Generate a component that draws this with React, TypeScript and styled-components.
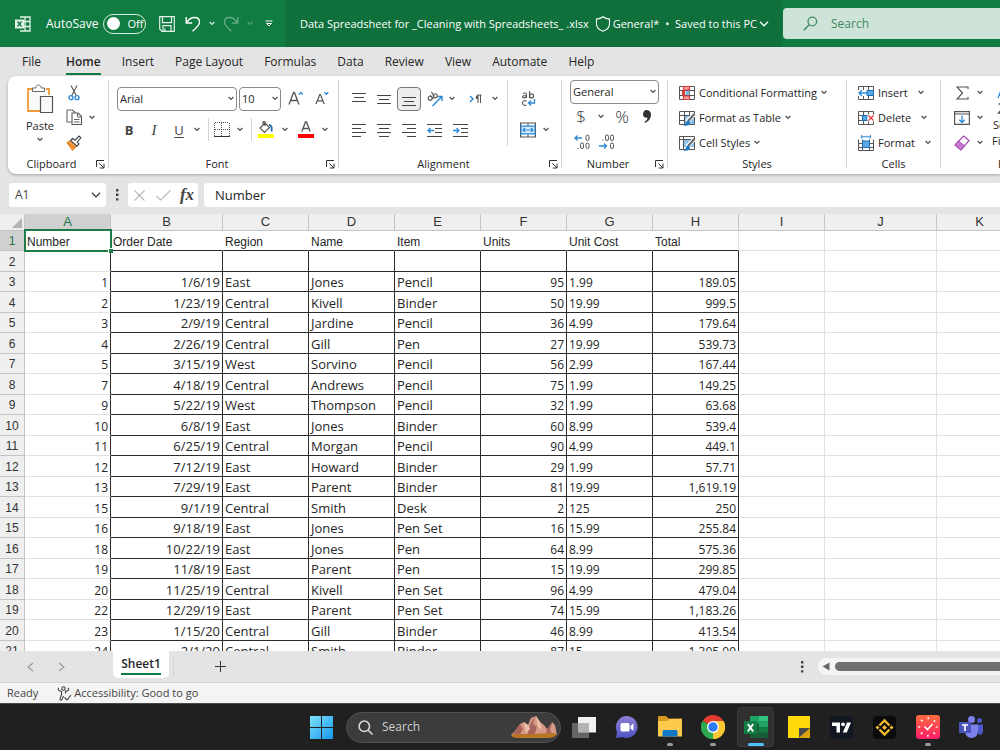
import React from "react";
import styled, { createGlobalStyle, css } from "styled-components";

const ui = `"Open Sans", "Noto Sans", sans-serif`;
const grid = `"Liberation Sans", Arial, sans-serif`;
const blue = "#2b88d8";
const ink = "#555";

const Global = createGlobalStyle`
  *, *::before, *::after { box-sizing: border-box; }
  body { margin: 0; background: #e4e4e4; color: #262626; font: 11px/16px ${ui}; }
  button, input, select { font: inherit; color: inherit; margin: 0; padding: 0; border: 0; background: none; border-radius: 0; }
  button { display: inline-flex; align-items: center; justify-content: center; white-space: nowrap; }
  svg { display: block; flex: none; }
`;

const Page = styled.div`
  display: flex;
  flex-direction: column;
  height: 100vh;
  overflow: hidden;
`;

/* ---------- title bar ---------- */
const TitleBar = styled.header`
  display: flex;
  flex: none;
  height: 47px;
  background: #107c41;
  color: #fff;
  overflow: hidden;
`;
const QuickAccess = styled.div`
  display: flex;
  align-items: center;
  flex: none;
  width: 286px;
  padding-left: 15px;
`;
const AutoSave = styled.label`
  display: flex;
  align-items: center;
  gap: 5px;
  margin: 0 12px 0 15px;
  font-size: 12px;
`;
const Track = styled.span`
  display: flex;
  align-items: center;
  gap: 7px;
  width: 43px;
  height: 20px;
  padding-left: 3px;
  border: 1px solid #d8ebe0;
  border-radius: 10px;
  font-size: 11px;
`;
const Knob = styled.input`
  appearance: none;
  width: 13px;
  height: 13px;
  border-radius: 50%;
  background: #fff;
`;
const QuickButton = styled.button<{ $w: number; $dim?: boolean }>`
  width: ${(p) => p.$w}px;
  height: 24px;
  color: #fff;
  opacity: ${(p) => (p.$dim ? 0.35 : 1)};
`;
const DocTitle = styled.div`
  display: flex;
  align-items: center;
  flex: none;
  width: 496px;
  padding-left: 14px;
  background: #0f703b;
  white-space: nowrap;
`;
const DocButton = styled.button`
  gap: 2px;
  margin-left: 6px;
`;
const SearchBox = styled.label`
  display: flex;
  align-items: center;
  gap: 13px;
  flex: 1 0 300px;
  height: 31px;
  margin: 8px 0 0 1px;
  padding-left: 20px;
  border-radius: 4px;
  background: #cfe4d8;
  color: #3f8a62;
  font-size: 12px;
`;
const BareInput = styled.input`
  flex: 1;
  min-width: 0;
  outline: 0;
  &::placeholder { color: inherit; opacity: 1; }
`;

/* ---------- ribbon tabs ---------- */
const Tabs = styled.nav`
  display: flex;
  align-items: center;
  flex: none;
  height: 29px;
  font-size: 12px;
`;
const FileTab = styled.button`
  height: 22px;
  padding: 0 14px 0 22px;
`;
const Tab = styled.button<{ $active?: boolean }>`
  height: 22px;
  padding: 0;
  margin: 0 10px 0 11px;
  ${(p) => p.$active && css`
    font-weight: 600;
    box-shadow: 0 2px 0 #107c41;
  `}
`;

/* ---------- ribbon ---------- */
const Ribbon = styled.section`
  display: flex;
  flex: none;
  height: 98px;
  margin-left: 8px;
  border-radius: 8px 0 0 8px;
  background: #fff;
  box-shadow: 0 1px 3px rgba(0, 0, 0, 0.28);
  overflow: hidden;
`;
const GroupBox = styled.div<{ $w: number }>`
  display: flex;
  flex-direction: column;
  flex: none;
  width: ${(p) => p.$w}px;
  height: 88px;
  margin-top: 4px;
  border-right: 1px solid #d4d4d4;
`;
const GroupBody = styled.div`
  display: flex;
  flex: none;
  height: 76px;
  padding-left: 8px;
`;
const GroupFoot = styled.div`
  display: flex;
  align-items: center;
  flex: none;
  height: 16px;
`;
const GroupName = styled.span`
  flex: 1;
  text-align: center;
`;
const Launcher = styled.button`
  width: 10px;
  height: 10px;
  margin-right: 3px;
`;
const Column = styled.div<{ $top?: number; $gap?: number }>`
  display: flex;
  flex-direction: column;
  align-items: flex-start;
  gap: ${(p) => p.$gap ?? 0}px;
  padding-top: ${(p) => p.$top ?? 0}px;
`;
const Line = styled.div`
  display: flex;
  align-items: center;
  height: 25px;
`;
const Tool = styled.button<{ $w: number }>`
  width: ${(p) => p.$w}px;
  height: 24px;
  flex: none;
`;
const BoxedTool = styled(Tool)`
  border: 1px solid #777;
  border-radius: 4px;
  background: #ededed;
`;
const Letter = styled(Tool)<{ $kind: "b" | "i" | "u" }>`
  font-size: 13px;
  color: #444;
  ${(p) => p.$kind === "b" && "font-weight: 700;"}
  ${(p) => p.$kind === "i" && `font-family: "Liberation Serif", serif; font-style: italic; font-size: 15px;`}
  ${(p) => p.$kind === "u" && "text-decoration: underline; text-underline-offset: 2px;"}
`;
const Rule = styled.span<{ $w: number; $h?: number }>`
  display: flex;
  justify-content: center;
  width: ${(p) => p.$w}px;
  height: ${(p) => p.$h ?? 23}px;
  &::before { content: ""; width: 1px; background: #d4d4d4; }
`;
const PasteButton = styled.button`
  flex-direction: column;
  width: 48px;
  height: 64px;
  margin-top: 1px;
  gap: 3px;
`;
const Picker = styled.span<{ $w: number }>`
  position: relative;
  width: ${(p) => p.$w}px;
  height: 24px;
  margin-right: 2px;
  select {
    appearance: none;
    width: 100%;
    height: 100%;
    padding-left: 2px;
    border: 1px solid #8a8a8a;
    border-radius: 4px;
  }
  svg { position: absolute; right: 3px; top: 9px; pointer-events: none; }
`;
const Labeled = styled.button`
  gap: 4px;
  height: 25px;
  margin-left: 3px;
`;
const CellsButton = styled(Labeled)`
  svg:last-child { margin-left: 6px; }
`;
const Glyph = styled(Tool)`
  font-size: 17px;
  font-weight: 300;
  color: #333;
`;
const SortButton = styled.button`
  flex-direction: column;
  width: 40px;
  height: 70px;
  margin: 2px 0 0 4px;
  span { display: flex; align-items: center; gap: 2px; }
`;

/* ---------- formula bar ---------- */
const FormulaBar = styled.div`
  display: flex;
  align-items: center;
  flex: none;
  height: 24px;
  margin: 9px 0 7px 9px;
`;
const NameBox = styled.div`
  display: flex;
  align-items: center;
  flex: none;
  width: 97px;
  height: 24px;
  padding: 0 5px 0 6px;
  border-radius: 3px;
  background: #fff;
  color: #444;
  font-size: 12px;
`;
const Dots = styled.span<{ $w: number }>`
  display: flex;
  justify-content: center;
  width: ${(p) => p.$w}px;
`;
const FxBox = styled.div`
  display: flex;
  flex: none;
  width: 70px;
  border-radius: 3px;
  background: #fff;
`;
const Fx = styled(Tool)`
  font: italic 700 17px/20px "Liberation Serif", serif;
  color: #444;
`;
const FormulaInput = styled.input`
  flex: 1;
  min-width: 0;
  height: 24px;
  margin-left: 6px;
  padding-left: 11px;
  border-radius: 3px 0 0 3px;
  background: #fff;
  font-size: 13px;
`;

/* ---------- sheet ---------- */
const SheetArea = styled.main`
  flex: 1;
  min-height: 0;
  overflow: hidden;
  background: #fff;
`;
const Sheet = styled.table`
  width: 100%;
  table-layout: fixed;
  border-collapse: separate;
  border-spacing: 0;
  font-family: ${grid};
  font-size: 12px;
  line-height: 17px;
  tr { height: 20px; }
  tr:nth-child(even) { height: 21px; }
  thead tr { height: 17px; }
`;
const headCell = css`
  padding: 2px 0 0;
  font-weight: 400;
  color: #333;
  text-align: center;
  background: #efefef;
  border-right: 1px solid #c4c4c4;
  border-bottom: 1px solid #c4c4c4;
`;
const ColHead = styled.th<{ $on?: boolean }>`
  ${headCell}
  padding: 0;
  font-size: 13px;
  line-height: 16px;
  ${(p) => p.$on && "background: #d0d0d0; color: #217346;"}
`;
const Corner = styled.td`
  ${headCell}
  svg { margin: 0 2px 0 auto; }
`;
const RowHead = styled.th<{ $on?: boolean }>`
  ${headCell}
  ${(p) => p.$on && "background: #d0d0d0; color: #217346;"}
`;
const Cell = styled.td<{ $num?: boolean; $boxed?: boolean; $small?: boolean; $right?: string }>`
  padding: 2px 2px 0;
  white-space: nowrap;
  text-align: ${(p) => (p.$num ? "right" : "left")};
  font-family: ${ui};
  font-size: ${(p) => (p.$small ? 12 : 13)}px;
  border-right: 1px solid ${(p) => p.$right ?? (p.$boxed ? "#2b2b2b" : "#e1e1e1")};
  border-bottom: 1px solid ${(p) => (p.$boxed ? "#2b2b2b" : "#e1e1e1")};
`;
const TitleCell = styled(Cell)`
  padding-top: 4px;
  line-height: 15px;
  font-family: ${grid};
  font-size: 12px;
`;
const ActiveCell = styled(TitleCell)`
  position: relative;
  &::before {
    content: "";
    position: absolute;
    inset: -2px -2px -2px -1px;
    border: 2px solid #1e7b45;
  }
  &::after {
    content: "";
    position: absolute;
    right: -3px;
    bottom: -3px;
    width: 5px;
    height: 5px;
    background: #1e7b45;
    border: solid #fff;
    border-width: 1px 0 0 1px;
  }
`;

/* ---------- sheet tabs and status ---------- */
const SheetTabs = styled.div`
  display: flex;
  align-items: center;
  flex: none;
  height: 32px;
  border-bottom: 1px solid #d2d2d2;
  padding-left: 15px;
  overflow: hidden;
`;
const SheetTab = styled.button`
  align-self: flex-start;
  width: 56px;
  height: 27px;
  margin: 0 4px 0 36px;
  border-radius: 0 0 5px 5px;
  background: #fff;
  font-size: 12px;
  font-weight: 600;
  span { height: 20px; line-height: 18px; border-bottom: 2px solid #107c41; }
`;
const Spacer = styled.span`
  flex: 1;
`;
const ScrollBar = styled.div`
  display: flex;
  align-items: center;
  gap: 5px;
  flex: none;
  width: 182px;
  height: 17px;
  padding-left: 4px;
  border-radius: 8px 0 0 8px;
  background: #f5f5f5;
`;
const Thumb = styled.span`
  flex: 1;
  height: 9px;
  border-radius: 5px 0 0 5px;
  background: #707070;
`;
const Status = styled.footer`
  display: flex;
  align-items: center;
  flex: none;
  height: 20px;
  padding-left: 7px;
  background: #f4f4f4;
  color: #444;
`;
const StatusButton = styled.button`
  gap: 2px;
  margin-left: 19px;
`;

/* ---------- taskbar ---------- */
const TaskBar = styled.nav`
  display: flex;
  align-items: center;
  flex: none;
  height: 47px;
  padding-left: 300px;
  border-top: 1px solid #484848;
  background: #202020;
  overflow: hidden;
`;
const TaskSearch = styled.label`
  display: flex;
  align-items: center;
  gap: 9px;
  flex: none;
  width: 215px;
  height: 31px;
  margin: 0 1px 0 3px;
  padding: 0 3px 0 11px;
  border: 1px solid #505050;
  border-radius: 16px;
  background: #3c3c3c;
  color: #d0d0d0;
  font-size: 12px;
`;
const TaskButton = styled.button<{ $state?: "open" | "active" }>`
  position: relative;
  flex: none;
  width: 43px;
  height: 46px;
  ${(p) => p.$state === "active" && css`
    &::before {
      content: "";
      position: absolute;
      inset: 3px 3px;
      border-radius: 4px;
      background: #303030;
      border: 1px solid #393939;
    }
  `}
  ${(p) => p.$state && css`
    &::after {
      content: "";
      position: absolute;
      bottom: 4px;
      width: ${p.$state === "active" ? 16 : 6}px;
      height: 3px;
      border-radius: 2px;
      background: ${p.$state === "active" ? "#4cc2ff" : "#9a9a9a"};
    }
  `}
  svg { position: relative; }
`;

/* ---------- icons ---------- */
type SvgProps = { w: number; h?: number; children: React.ReactNode };
const Svg = ({ w, h = w, children }: SvgProps) => (
  <svg width={w} height={h} viewBox={`0 0 ${w} ${h}`} fill="none" aria-hidden="true">{children}</svg>
);
const Chev = ({ big }: { big?: boolean }) =>
  big ? (
    <Svg w={10} h={6}><path d="M1 .8 5 4.8 9 .8" stroke="currentColor" strokeWidth="1.3" /></Svg>
  ) : (
    <Svg w={6} h={5}><path d="M.6 1 3 3.4 5.4 1" stroke="currentColor" strokeWidth="1.3" strokeOpacity=".8" /></Svg>
  );
const ChevTool = ({ w, label }: { w: number; label: string }) => (
  <Tool $w={w} aria-label={label}><Chev /></Tool>
);
const ThreeDots = () => (
  <Svg w={3} h={12}><path d="M0 0h2.4v2.4H0zM0 4.6h2.4V7H0zM0 9.2h2.4v2.4H0z" fill="#444" /></Svg>
);
const ExcelLine = () => (
  <Svg w={16}>
    <path d="M5 1h10v14H5M5 5.5h10M5 10.5h10M10 1v14" stroke="#e4f2ea" strokeWidth="1.3" />
    <path d="M0 3.5h9v9H0z" fill="#e4f2ea" />
    <path d="m2.5 5.5 4 5m0-5-4 5" stroke="#107c41" strokeWidth="1.4" />
  </Svg>
);
const SaveIcon = () => (
  <Svg w={16}>
    <path d="M.7.7h14.6v14.6H3L.7 13z M3.5.7v6h9v-6M4 15V9.700h8V15M6 15v-2.500" stroke="#e4f2ea" strokeWidth="1.2" />
  </Svg>
);
const UndoIcon = () => (
  <Svg w={16}>
    <path d="M1.200 1v6h6M1.500 6.500C4 3 6.500 1.500 9.500 1.500c3 0 5 2 5 4.700 0 3-2.500 5-7 9" stroke="#fff" strokeWidth="1.4" />
  </Svg>
);
const RedoIcon = () => (
  <Svg w={16}>
    <path d="M14.800 1v6h-6M14.500 6.500C12 3 9.500 1.500 6.500 1.500c-3 0-5 2-5 4.700 0 3 2.500 5 7 9" stroke="#fff" strokeWidth="1.4" />
  </Svg>
);
const CustomizeIcon = () => (
  <Svg w={8} h={7}><path d="M.5 1h7M1.500 3.500 4 6l2.500-2.500z" stroke="#fff" /></Svg>
);
const ShieldIcon = () => (
  <Svg w={16}><path d="M8 .8c2 1.600 4 2.200 6.500 2.300V8c0 3.500-2.500 5.800-6.500 7.300C4 13.800 1.500 11.500 1.500 8V3.100C4 3 6 2.400 8 .8z" stroke="#fff" strokeWidth="1.100" /></Svg>
);
const Lens = () => (
  <Svg w={15}><circle cx="9.300" cy="5.500" r="4.300" stroke="#3f8a62" strokeWidth="1.300" /><path d="M6.200 8.700.8 14.300" stroke="#3f8a62" strokeWidth="1.400" /></Svg>
);
const LauncherIcon = () => (
  <Svg w={9}><path d="M.5 7V.5H8M3.200 3.200 8 8M8 3.700V8H3.700" stroke="#333" /></Svg>
);
const PasteIcon = () => (
  <Svg w={28} h={31}>
    <path d="M8 5H2v22h12M20 5h3v6" stroke="#ef9a3a" strokeWidth="1.800" />
    <path d="M3.500 6.500h17V12H14v13H3.500z" fill="#fafafa" />
    <path d="M6.500 7.500V4h3.200c.4-2 1.500-3 2.800-3s2.400 1 2.800 3h3.200v3.500z" fill="#fff" stroke="#666" />
    <path d="M14.500 12.500h12v16h-12z" fill="#fafafa" stroke="#555" strokeWidth="1.200" />
  </Svg>
);
const CutIcon = () => (
  <Svg w={12} h={16}>
    <path d="M3 .5l5.200 10M9 .5l-5.200 10" stroke="#555" strokeWidth="1.100" />
    <circle cx="3" cy="12.700" r="2" stroke={blue} strokeWidth="1.300" /><circle cx="9" cy="12.700" r="2" stroke={blue} strokeWidth="1.300" />
  </Svg>
);
const CopyIcon = () => (
  <Svg w={17}>
    <path d="M5.500 13H1V1h5.500L9 3.500" stroke="#666" strokeWidth="1.100" />
    <path d="M6 4h6l3.500 3.500v8H6z" fill="#fff" stroke="#555" strokeWidth="1.100" />
    <path d="M11.500 4v4h4M8 10.500h5.500M8 13h5.500" stroke="#666" />
  </Svg>
);
const BrushIcon = () => (
  <Svg w={16}>
    <path d="M1 7.500 5 5.500l6 5-4.500 5z" fill="#f5a34c" stroke="#e07b16" />
    <path d="M1.500 8 9 13" stroke="#e07b16" strokeWidth="1.500" />
    <path d="M4.500 5.500 6.500 3.500l2.500 1.700L13 1l2 1.800-3.800 4.200L13 9l-2 2.200z" fill="#fff" stroke="#444" strokeWidth="1.100" />
  </Svg>
);
const GrowFont = ({ down }: { down?: boolean }) =>
  down ? (
    <Svg w={14} h={15}>
      <path d="m1 13 3.800-9.500h.6L9.200 13M2.400 9.800h5.400" stroke={ink} strokeWidth="1.200" />
      <path d="m9.500 1.200 1.900 2 1.900-2" stroke={blue} strokeWidth="1.300" />
    </Svg>
  ) : (
    <Svg w={16} h={15}>
      <path d="m1 13.500 4.600-12h.8l4.600 12M2.700 9.500h6.600" stroke={ink} strokeWidth="1.300" />
      <path d="m11 3.500 1.900-2 1.900 2" stroke={blue} strokeWidth="1.300" />
    </Svg>
  );
const BorderIcon = () => (
  <Svg w={16}>
    <path d="M1 .5h14M1 7.500h14M.5 1v13M7.500 1v13M15.500 1v13" stroke="#555" strokeDasharray="1 1" />
    <path d="M0 14.500h16" stroke="#333" />
  </Svg>
);
const FillIcon = () => (
  <Svg w={16} h={17}>
    <path d="m2 7 5-5 4.500 4.500-5 5L2 7zM5 4V1.200c0-1 2-1 2 0V5" stroke="#555" strokeWidth="1.200" />
    <path d="M11 4c3 0 3 3 2.500 6.500" stroke="#1c6fb5" strokeWidth="1.800" />
    <path d="M0 13h16v4H0z" fill="#ff0" />
  </Svg>
);
const FontColorIcon = () => (
  <Svg w={16} h={17}>
    <path d="m3.800 10.500 3.700-9.500h1l3.700 9.500M5 7.500h6" stroke="#555" strokeWidth="1.300" />
    <path d="M0 13h16v4H0z" fill="#f00" />
  </Svg>
);
const Lines = ({ rows }: { rows: [number, number, number][] }) => (
  <Svg w={14}>{rows.map(([x, y, l]) => <path key={y} d={`M${x} ${y}.500h${l}`} stroke="#444" />)}</Svg>
);
const vLines = (y: number): [number, number, number][] => [[0, y, 14], [2, y + 4, 10], [0, y + 8, 14]];
const leftLines: [number, number, number][] = [[0, 1, 14], [0, 5, 9], [0, 9, 14], [0, 13, 9]];
const centerLines: [number, number, number][] = [[0, 1, 14], [2, 5, 10], [0, 9, 14], [2, 13, 10]];
const rightLines: [number, number, number][] = [[0, 1, 14], [5, 5, 9], [0, 9, 14], [5, 13, 9]];
const IndentIcon = ({ out }: { out?: boolean }) => (
  <Svg w={15} h={14}>
    <path d="M0 1.500h15M8 5.500h7M8 9.500h7M0 13.500h15" stroke="#444" />
    <path d={out ? "M7 7.500H1M3.500 5 1 7.500 3.500 10" : "M0 7.500h6M3.500 5 6 7.500 3.500 10"} stroke={blue} strokeWidth="1.300" />
  </Svg>
);
const OrientIcon = () => (
  <Svg w={17} h={16}>
    <g stroke={ink} strokeWidth="1.100">
      <circle cx="3.200" cy="7.300" r="2" /><path d="m3 4 3.500 4" />
      <circle cx="8.300" cy="4.700" r="2" /><path d="m4.300.8 3 4.500" />
    </g>
    <path d="M5.500 15 15 5.500M10.500 5.500H15V10" stroke={blue} strokeWidth="1.400" />
  </Svg>
);
const LtrIcon = () => (
  <Svg w={13} h={10}>
    <path d="m1 2 3 3-3 3" stroke={blue} strokeWidth="1.400" />
    <path d="M9 1v8M11.500 1v8M12.500 1H8.500" stroke={ink} /><path d="M9 1a2.200 2.200 0 0 0 0 4.400z" fill={ink} />
  </Svg>
);
const WrapIcon = () => (
  <Svg w={15} h={17}>
    <g stroke={ink} strokeWidth="1.100">
      <path d="M2 3.500c2-1 3.500-.5 3.500 1V8M5.500 5.500C3 5.500 1.500 6 1.500 7s2.500 1.500 4-.5M8.500 1v7" />
      <circle cx="10.600" cy="5.900" r="2" /><path d="M5.500 11c-2-1-4 0-4 2s2 3 4 2" />
    </g>
    <path d="M13.500 9v4H7.500M10 10.500 7.500 13l2.500 2.500" stroke={blue} strokeWidth="1.300" />
  </Svg>
);
const MergeIcon = () => (
  <Svg w={16}>
    <path d="M.6 1h14.800v14H.6z" stroke={ink} strokeWidth="1.200" /><path d="M8 1v3M8 12v3" stroke={ink} />
    <path d="M1 4.200h14v7.600H1z" fill="#d8ebfa" stroke={blue} strokeWidth="1.200" />
    <path d="M3 8h10M5 6 3 8l2 2M11 6l2 2-2 2" stroke={blue} strokeWidth="1.200" />
  </Svg>
);
const Zero = ({ x, y }: { x: number; y: number }) => <rect x={x} y={y} width="3" height="5.500" rx="1.500" stroke={ink} />;
const DecimalIcon = ({ less }: { less?: boolean }) => (
  <Svg w={16}>
    {less ? (
      <>
        <path d="M4 5.500v1" stroke={ink} /><Zero x={6.5} y={1} /><Zero x={11.5} y={1} />
        <Zero x={11.5} y={9} /><path d="M0 12h7.500M5 9.500 7.500 12 5 14.500" stroke={blue} strokeWidth="1.300" />
      </>
    ) : (
      <>
        <Zero x={12} y={1} /><path d="M8 4H1M3.500 1.500 1 4l2.500 2.500" stroke={blue} strokeWidth="1.300" />
        <path d="M4 14v1" stroke={ink} /><Zero x={6.500} y={9} /><Zero x={12} y={9} />
      </>
    )}
  </Svg>
);
const CommaIcon = () => (
  <Svg w={8} h={13}><path d="M3.500 0C6 0 8 1.500 8 4.500c0 4-2.500 7-6 8.500l-.7-1c2-1.200 3.200-2.600 3.200-4.200-3 .4-4.500-1.200-4.500-3.500S1.500 0 3.500 0z" fill="#333" /></Svg>
);
const gridPath = "M.5 1.500h15v13H.5zM.5 5.500h15M.5 10.500h15M5.500 1v13.500M10.500 1v13.500";
const CondIcon = () => (
  <Svg w={16}>
    <path d={gridPath} stroke={ink} />
    <path d="M4.500 1.500h6v3.500h-6zM4.500 11h6v3.500h-6z" fill="#f8a0a0" stroke="#e03c3c" strokeWidth="1.200" />
    <path d="M3 5.500h3v5H3z" fill="#e03c3c" /><path d="M6.500 6h4v4h-4z" fill="#7db9e8" />
  </Svg>
);
const TableIcon = ({ plain }: { plain?: boolean }) => (
  <Svg w={16}>
    <path d={plain ? "M.5 1.500h15v13H.5zM.5 4.500h15M4.500 1v13.500" : gridPath} stroke={ink} />
    <path d={plain ? "M5 5h10v7H5z" : "M6 6h9v8H6z"} fill="#8cc3ee" />
    <path d="M15.500 4 8 11.500" stroke="#fff" strokeWidth="4" /><path d="M15.500 4 9 11" stroke="#666" strokeWidth="2" />
    <path d="M9.500 10.500c-3 .5-2 3.500-5 5 3 .8 6.500 0 6.500-3z" fill="#1f78c4" />
  </Svg>
);
const InsertIcon = () => (
  <Svg w={16}>
    <path d={gridPath} stroke={ink} />
    <path d="M0 5h10v6H0z" fill="#fff" /><path d="M9 5.500h6.500v5H9z" fill="#5aa9e6" stroke="#1c6fb5" />
    <path d="M9 8H1M4 5 1 8l3 3" stroke={blue} strokeWidth="1.300" />
  </Svg>
);
const DeleteIcon = () => (
  <Svg w={16}>
    <path d={gridPath} stroke={ink} />
    <path d="M4.500 5.500H9v5H4.500z" fill="#5aa9e6" stroke="#1c6fb5" /><path d="M9.500 4.500H16v7H9.500z" fill="#fff" />
    <path d="m10.500 5.500 5 5m0-5-5 5" stroke="#e03c3c" strokeWidth="1.300" />
  </Svg>
);
const FormatIcon = () => (
  <Svg w={16}>
    <path d="M.5 4.500v11h15v-11M.5 8.500h15M.5 12.500h15M4.500 4.500V15M11.500 4.500V15" stroke={ink} />
    <path d="M4.500 6h7v6.500h-7z" fill="#5aa9e6" stroke="#1c6fb5" />
    <path d="M3.500 0v3.500M12.500 0v3.500M4 1.800h8" stroke={blue} />
  </Svg>
);
const SigmaIcon = () => (
  <Svg w={13} h={14}><path d="M12 3V1H1l5.500 6L1 13h11v-2" stroke={ink} strokeWidth="1.200" /></Svg>
);
const FillDownIcon = () => (
  <Svg w={16} h={14}><path d="M.6.6h14.800v12.800H.6zM.6 3h14.800" stroke={ink} strokeWidth="1.200" /><path d="M8 4.500v7M5.300 8.800 8 11.500l2.700-2.700" stroke={blue} strokeWidth="1.300" /></Svg>
);
const EraserIcon = () => (
  <Svg w={16}><path d="m9.500 1 5.500 4.500L7 15 1 10z" fill="#fff" stroke="#a64ab0" strokeWidth="1.200" /><path d="M4.500 6 1 10l6 5 3.500-4.200z" fill="#c77bd0" stroke="#a64ab0" /></Svg>
);
const SortIcon = () => (
  <Svg w={24} h={32}>
    <path d="m1 13 4-10h1l4 10M2.500 10h6" stroke={blue} strokeWidth="1.300" /><path d="M1.500 19h7.500l-7.500 9H9" stroke={ink} strokeWidth="1.300" />
    <path d="M12 4h11l-4 6v7l-3-2v-5z" stroke={ink} strokeWidth="1.200" />
  </Svg>
);
const A11yIcon = () => (
  <Svg w={15}>
    <g stroke="#444" strokeWidth="1.100">
      <circle cx="6.500" cy="2.500" r="1.700" /><path d="M2 2c-1.500 1-.5 2.500.5 2.800l2 .7v3L3 13c0 1.500 1.500 1.500 2 .5l1.500-3.500M11 2c1.500 1 .5 2.500-.5 2.800l-2 .7v2" />
      <path d="m7.500 11.500 2.500 2.500 4-5" />
    </g>
  </Svg>
);
const StartIcon = () => (
  <Svg w={23}>
    <defs><linearGradient id="win" x1="0" y1="0" x2="23" y2="23" gradientUnits="userSpaceOnUse"><stop stopColor="#7fe3fb" /><stop offset="1" stopColor="#1596ee" /></linearGradient></defs>
    <path d="M0 0h11v11H0zM12 0h11v11H12zM0 12h11v11H0zM12 12h11v11H12z" fill="url(#win)" />
  </Svg>
);
const TaskLens = () => (
  <Svg w={15}><circle cx="6.300" cy="6.300" r="5.200" stroke="#dcdcdc" strokeWidth="1.500" /><path d="m10.200 10.200 4.300 4.300" stroke="#dcdcdc" strokeWidth="1.500" /></Svg>
);
const Mountains = () => (
  <Svg w={46} h={24}>
    <path d="M0 20 4 16l5-7 4-2 4 3 3-7 5-2 4 6 4 3 3 4 3-1 2-6 3 3 2 10z" fill="#d49a86" />
    <path d="m9 9 3 5-4 7H1zM24 1l-2 8 4 3-3 9h-7l3-11zM41 7l-2 8 3 6h-7l1-7z" fill="#a9645d" />
    <path d="m13 7 4 3 2 4-4 4zM25 1l4 6 2 8-4-3z" fill="#edc0a7" />
    <path d="M0 20c8-2 14 0 22-1 8 0 16-2 24 0-2 3-5 4-9 4H6c-3 0-5-1-6-3z" fill="#b87526" />
  </Svg>
);
const TaskView = () => (
  <Svg w={24} h={21}><path d="M6 0h18v15.500H6z" fill="#f1f1f1" /><path d="M0 6h17v15H0z" fill="#777" fillOpacity=".8" /><path d="M6 6h11v9.500H6z" fill="#b4b4b4" /></Svg>
);
const ChatIcon = () => (
  <Svg w={23}>
    <defs><linearGradient id="chat" x1="0" y1="0" x2="0" y2="23" gradientUnits="userSpaceOnUse"><stop stopColor="#8a7fd0" /><stop offset="1" stopColor="#4f52c8" /></linearGradient></defs>
    <path d="M12 0a11 11 0 1 1-5 21L1 22l1-6A11 11 0 0 1 12 0z" fill="url(#chat)" />
    <rect x="5.500" y="7" width="9" height="8.500" rx="1.500" fill="#fff" /><path d="m15.500 10 3-2.500v7.500l-3-2.500z" fill="#fff" />
  </Svg>
);
const FolderIcon = () => (
  <Svg w={24} h={22}><path d="M0 1.500C0 .5.500 0 1.500 0H8l2.500 2.500H24V8H0z" fill="#d9981e" /><path d="M0 5h9l2-2h13v17.500H0z" fill="#fccb4d" /><path d="M4.500 20.500V16c0-1.500.5-2 2-2h11c1.500 0 2 .5 2 2v4.500z" fill="#1279c9" /></Svg>
);
const ChromeIcon = () => (
  <Svg w={24}>
    <path d="M12 12 1.600 6A12 12 0 0 1 22.400 6z" fill="#e33b2e" /><path d="M12 12 22.400 6A12 12 0 0 1 12 24z" fill="#fcc934" />
    <path d="M12 12v12A12 12 0 0 1 1.600 6z" fill="#2da94f" /><path d="M12 6h10.400a12 12 0 0 1-10.400 18l5-9z" fill="#fcc934" /><path d="M1.600 6 7 15l5 3-.5 6A12 12 0 0 1 1.600 6z" fill="#2da94f" />
    <circle cx="12" cy="12" r="6" fill="#fff" /><circle cx="12" cy="12" r="4.700" fill="#2f7bf0" />
  </Svg>
);
const ExcelIcon = () => (
  <Svg w={24} h={22}>
    <path d="M6 0h18v22H6z" fill="#185c37" /><path d="M6 0h9v7.500H6z" fill="#21a366" /><path d="M15 0h9v5.500h-9z" fill="#33c481" /><path d="M15 5.500h9V11h-9z" fill="#21a366" /><path d="M15 11h9v5.500h-9z" fill="#107c41" />
    <path d="M0 5h13v13H0z" fill="#107c41" /><path d="m3.800 8 5.400 7.500M9.200 8 3.800 15.500" stroke="#fff" strokeWidth="1.900" />
  </Svg>
);
const NotesIcon = () => (
  <Svg w={22}><path d="M0 0h22v12l-10 10H0z" fill="#ffd90a" /><path d="M11 12h11L11 22z" fill="#4a4a4a" /><path d="M22 12v10H11z" fill="#d9a60c" /></Svg>
);
const TradingIcon = () => (
  <Svg w={23}><rect width="23" height="23" rx="3" fill="#131722" /><path d="M2 6.500h8v10H6.500V10H2z" fill="#fff" /><circle cx="13" cy="8.300" r="1.900" fill="#fff" /><path d="M17 6.500h4l-4.200 10h-4z" fill="#fff" /></Svg>
);
const CoinIcon = () => (
  <Svg w={23}>
    <rect width="23" height="23" rx="4" fill="#0b0b0c" />
    <path d="m6.500 9.500 5-5 5 5M6.500 13.500l5 5 5-5" stroke="#f3ba2f" strokeWidth="2.400" />
    <path d="m11.500 9 2.500 2.500-2.500 2.500L9 11.500zM4.500 9.500l2 2-2 2-2-2zM18.500 9.500l2 2-2 2-2-2z" fill="#f3ba2f" />
  </Svg>
);
const ClockIcon = () => (
  <Svg w={24}>
    <defs><linearGradient id="clk" x1="0" y1="0" x2="0" y2="24" gradientUnits="userSpaceOnUse"><stop stopColor="#ff6a3d" /><stop offset="1" stopColor="#fb1d68" /></linearGradient></defs>
    <rect width="24" height="24" rx="3" fill="url(#clk)" />
    <circle cx="12" cy="12" r="8.800" stroke="#fff" strokeWidth="2" strokeDasharray="1.600 5.311" strokeDashoffset=".8" />
    <path d="m8.500 11.500 3 3 5-5.500" stroke="#fff" strokeWidth="1.600" />
  </Svg>
);
const TeamsIcon = () => (
  <Svg w={24} h={22}>
    <circle cx="12.500" cy="3.500" r="3.500" fill="#7b83eb" /><circle cx="20.500" cy="4.500" r="2.500" fill="#5059c9" />
    <path d="M16 8.500h8v6c0 3-2 4.500-4 4.500z" fill="#5059c9" /><path d="M6 8.500h13V15c0 4-2.500 7-6.500 7S6 19 6 15z" fill="#7b83eb" />
    <path d="M0 6h12v11H0z" fill="#4b53bc" /><path d="M3 9h6M6 9v6" stroke="#fff" strokeWidth="1.700" />
  </Svg>
);
const NavArrow = ({ next }: { next?: boolean }) => (
  <Svg w={7} h={10}><path d={next ? "m1 1 5 4-5 4" : "M6 1 1 5l5 4"} stroke="#999" strokeWidth="1.200" /></Svg>
);

/* ---------- data ---------- */
const letters = "ABCDEFGHIJKLMNOP".split("");
const widths = [86, 112, 86, 86, 86, 86, 86, 86, 86, 112, 86, 86, 86, 86, 86, 86];
const titles = ["Number", "Order Date", "Region", "Name", "Item", "Units", "Unit Cost", "Total"];
const orders = `1|1/6/19|East|Jones|Pencil|95|1.99|189.05
2|1/23/19|Central|Kivell|Binder|50|19.99|999.5
3|2/9/19|Central|Jardine|Pencil|36|4.99|179.64
4|2/26/19|Central|Gill|Pen|27|19.99|539.73
5|3/15/19|West|Sorvino|Pencil|56|2.99|167.44
7|4/18/19|Central|Andrews|Pencil|75|1.99|149.25
9|5/22/19|West|Thompson|Pencil|32|1.99|63.68
10|6/8/19|East|Jones|Binder|60|8.99|539.4
11|6/25/19|Central|Morgan|Pencil|90|4.99|449.1
12|7/12/19|East|Howard|Binder|29|1.99|57.71
13|7/29/19|East|Parent|Binder|81|19.99|1,619.19
15|9/1/19|Central|Smith|Desk|2|125|250
16|9/18/19|East|Jones|Pen Set|16|15.99|255.84
18|10/22/19|East|Jones|Pen|64|8.99|575.36
19|11/8/19|East|Parent|Pen|15|19.99|299.85
20|11/25/19|Central|Kivell|Pen Set|96|4.99|479.04
22|12/29/19|East|Parent|Pen Set|74|15.99|1,183.26
23|1/15/20|Central|Gill|Binder|46|8.99|413.54
24|2/1/20|Central|Smith|Binder|87|15|1,305.00`.split("\n").map((r) => r.split("|"));
const rows = [titles.map(() => ""), ...orders];
const rightAligned = [0, 1, 5, 7];
const compact = [0, 5, 6, 7];

const Group = ({ w, name, launcher, children }: { w: number; name: string; launcher?: boolean; children: React.ReactNode }) => (
  <GroupBox $w={w} role="group" aria-label={name}>
    <GroupBody>{children}</GroupBody>
    <GroupFoot>
      <GroupName>{name}</GroupName>
      {launcher && <Launcher aria-label={`${name} settings`}><LauncherIcon /></Launcher>}
    </GroupFoot>
  </GroupBox>
);
const PickList = ({ w, label, value }: { w: number; label: string; value: string }) => (
  <Picker $w={w}>
    <select aria-label={label} defaultValue={value}><option>{value}</option></select>
    <Chev />
  </Picker>
);

export default function App() {
  return (
    <Page>
      <Global />
      <TitleBar>
        <QuickAccess>
          <ExcelLine />
          <AutoSave>AutoSave<Track><Knob type="checkbox" role="switch" />Off</Track></AutoSave>
          <QuickButton $w={18} aria-label="Save"><SaveIcon /></QuickButton>
          <QuickButton $w={34} aria-label="Undo"><UndoIcon /></QuickButton>
          <QuickButton $w={6} aria-label="Undo list"><Chev /></QuickButton>
          <QuickButton $w={32} $dim aria-label="Redo"><RedoIcon /></QuickButton>
          <QuickButton $w={6} $dim aria-label="Redo list"><Chev /></QuickButton>
          <QuickButton $w={34} aria-label="Customize toolbar"><CustomizeIcon /></QuickButton>
        </QuickAccess>
        <DocTitle>
          Data Spreadsheet for _Cleaning with Spreadsheets_ .xlsx
          <DocButton><ShieldIcon />General*</DocButton>
          <DocButton>•&nbsp; Saved to this PC <Chev big /></DocButton>
        </DocTitle>
        <SearchBox><Lens /><BareInput placeholder="Search" aria-label="Search" /></SearchBox>
      </TitleBar>

      <Tabs>
        <FileTab>File</FileTab>
        <Tab $active>Home</Tab>
        {["Insert", "Page Layout", "Formulas", "Data", "Review", "View", "Automate", "Help"].map((t) => <Tab key={t}>{t}</Tab>)}
      </Tabs>

      <Ribbon>
        <Group w={101} name="Clipboard" launcher>
          <PasteButton><PasteIcon />Paste<Chev /></PasteButton>
          <Column>
            <Line><Tool $w={20} aria-label="Cut"><CutIcon /></Tool></Line>
            <Line><Tool $w={20} aria-label="Copy"><CopyIcon /></Tool><ChevTool w={16} label="Copy options" /></Line>
            <Line><Tool $w={20} aria-label="Format painter"><BrushIcon /></Tool></Line>
          </Column>
        </Group>

        <Group w={230} name="Font" launcher>
          <Column $top={6} $gap={6}>
            <Line>
              <PickList w={120} label="Font" value="Arial" />
              <PickList w={42} label="Font size" value="10" />
              <Tool $w={26} aria-label="Increase font size"><GrowFont /></Tool>
              <Tool $w={26} aria-label="Decrease font size"><GrowFont down /></Tool>
            </Line>
            <Line>
              <Letter $w={24} $kind="b">B</Letter>
              <Letter $w={26} $kind="i">I</Letter>
              <Letter $w={24} $kind="u">U</Letter>
              <ChevTool w={12} label="Underline options" />
              <Rule $w={10} />
              <Tool $w={18} aria-label="Borders"><BorderIcon /></Tool>
              <ChevTool w={18} label="Border options" />
              <Rule $w={4} />
              <Tool $w={26} aria-label="Fill color"><FillIcon /></Tool>
              <ChevTool w={12} label="Fill options" />
              <Tool $w={30} aria-label="Font color"><FontColorIcon /></Tool>
              <ChevTool w={8} label="Font color options" />
            </Line>
          </Column>
        </Group>

        <Group w={223} name="Alignment" launcher>
          <Column $top={6} $gap={6}>
            <Line>
              <Tool $w={24} aria-label="Top align"><Lines rows={vLines(1)} /></Tool>
              <Tool $w={26} aria-label="Middle align"><Lines rows={vLines(3)} /></Tool>
              <BoxedTool $w={24} aria-label="Bottom align"><Lines rows={vLines(5)} /></BoxedTool>
              <Tool $w={28} aria-label="Orientation"><OrientIcon /></Tool>
              <ChevTool w={6} label="Orientation options" />
              <Tool $w={40} aria-label="Text direction"><LtrIcon /></Tool>
              <Tool $w={0} aria-label="Direction options"><Chev /></Tool>
            </Line>
            <Line>
              <Tool $w={24} aria-label="Align left"><Lines rows={leftLines} /></Tool>
              <Tool $w={26} aria-label="Center"><Lines rows={centerLines} /></Tool>
              <Tool $w={24} aria-label="Align right"><Lines rows={rightLines} /></Tool>
              <Tool $w={26} aria-label="Decrease indent"><IndentIcon out /></Tool>
              <Tool $w={26} aria-label="Increase indent"><IndentIcon /></Tool>
            </Line>
          </Column>
          <Rule $w={24} $h={66} />
          <Column $top={6} $gap={6}>
            <Line><Tool $w={18} aria-label="Wrap text"><WrapIcon /></Tool></Line>
            <Line><Tool $w={18} aria-label="Merge and center"><MergeIcon /></Tool><ChevTool w={18} label="Merge options" /></Line>
          </Column>
        </Group>

        <Group w={106} name="Number" launcher>
          <Column>
            <PickList w={89} label="Number format" value="General" />
            <Line>
              <Glyph $w={22} aria-label="Currency">$</Glyph>
              <ChevTool w={18} label="Currency options" />
              <Glyph $w={24} aria-label="Percent">%</Glyph>
              <Tool $w={26} aria-label="Comma style"><CommaIcon /></Tool>
            </Line>
            <Line>
              <Tool $w={24} aria-label="Increase decimal"><DecimalIcon /></Tool>
              <Tool $w={26} aria-label="Decrease decimal"><DecimalIcon less /></Tool>
            </Line>
          </Column>
        </Group>

        <Group w={179} name="Styles">
          <Column>
            <Labeled><CondIcon />Conditional Formatting<Chev /></Labeled>
            <Labeled><TableIcon />Format as Table<Chev /></Labeled>
            <Labeled><TableIcon plain />Cell Styles<Chev /></Labeled>
          </Column>
        </Group>

        <Group w={94} name="Cells">
          <Column>
            <CellsButton><InsertIcon />Insert<Chev /></CellsButton>
            <CellsButton><DeleteIcon />Delete<Chev /></CellsButton>
            <CellsButton><FormatIcon />Format<Chev /></CellsButton>
          </Column>
        </Group>

        <Group w={150} name="Editing">
          <Column>
            <Line><Tool $w={26} aria-label="AutoSum"><SigmaIcon /></Tool><ChevTool w={10} label="AutoSum options" /></Line>
            <Line><Tool $w={26} aria-label="Fill"><FillDownIcon /></Tool><ChevTool w={10} label="Fill series options" /></Line>
            <Line><Tool $w={26} aria-label="Clear"><EraserIcon /></Tool><ChevTool w={10} label="Clear options" /></Line>
          </Column>
          <SortButton><SortIcon /><span>Sort &amp;</span><span>Filter<Chev /></span></SortButton>
        </Group>
      </Ribbon>

      <FormulaBar>
        <NameBox><BareInput aria-label="Name box" defaultValue="A1" /><Chev big /></NameBox>
        <Dots $w={22}><ThreeDots /></Dots>
        <FxBox>
          <Tool $w={22} aria-label="Cancel"><Svg w={11}><path d="m.5.5 10 10m0-10-10 10" stroke="#bbb" strokeWidth="1.200" /></Svg></Tool>
          <Tool $w={26} aria-label="Enter"><Svg w={15} h={11}><path d="m.5 6 4 4L14.500.5" stroke="#bbb" strokeWidth="1.200" /></Svg></Tool>
          <Fx $w={22} aria-label="Insert function">fx</Fx>
        </FxBox>
        <FormulaInput aria-label="Formula" defaultValue="Number" />
      </FormulaBar>

      <SheetArea>
        <Sheet>
          <colgroup>
            <col width={25} />
            {widths.map((w, i) => <col key={i} width={w} />)}
          </colgroup>
          <thead>
            <tr>
              <Corner><Svg w={10}><path d="M10 0v10H0z" fill="#b4b4b4" /></Svg></Corner>
              {letters.map((l, i) => <ColHead key={l} scope="col" $on={i === 0}>{l}</ColHead>)}
            </tr>
          </thead>
          <tbody>
            <tr>
              <RowHead scope="row" $on>1</RowHead>
              {letters.map((l, i) =>
                i === 0 ? <ActiveCell key={l} $boxed>{titles[0]}</ActiveCell>
                : <TitleCell key={l} $boxed={i < 8} $right={i < 7 ? "#fff" : "#e1e1e1"}>{titles[i]}</TitleCell>
              )}
            </tr>
            {rows.map((r, n) => (
              <tr key={n}>
                <RowHead scope="row">{n + 2}</RowHead>
                {letters.map((l, i) => (
                  <Cell key={l} $boxed={i > 0 && i < 8} $right={i === 0 ? "#2b2b2b" : undefined} $num={rightAligned.includes(i)} $small={compact.includes(i)}>
                    {r[i]}
                  </Cell>
                ))}
              </tr>
            ))}
          </tbody>
        </Sheet>
      </SheetArea>

      <SheetTabs>
        <Tool $w={31} aria-label="Previous sheet"><NavArrow /></Tool>
        <Tool $w={31} aria-label="Next sheet"><NavArrow next /></Tool>
        <SheetTab><span>Sheet1</span></SheetTab>
        <Rule $w={1} $h={18} />
        <Tool $w={92} aria-label="New sheet"><Svg w={11}><path d="M5.500 0v11M0 5.500h11" stroke="#333" /></Svg></Tool>
        <Spacer />
        <Dots $w={32}><ThreeDots /></Dots>
        <ScrollBar><Svg w={8} h={9}><path d="M7.500.5v8L.5 4.500z" fill="#666" /></Svg><Thumb /></ScrollBar>
      </SheetTabs>
      <Status>
        Ready
        <StatusButton><A11yIcon />Accessibility: Good to go</StatusButton>
      </Status>

      <TaskBar>
        <TaskButton aria-label="Start"><StartIcon /></TaskButton>
        <TaskSearch><TaskLens /><BareInput placeholder="Search" aria-label="Search the computer" /><Mountains /></TaskSearch>
        <TaskButton aria-label="Task view"><TaskView /></TaskButton>
        <TaskButton aria-label="Chat"><ChatIcon /></TaskButton>
        <TaskButton $state="open" aria-label="Files"><FolderIcon /></TaskButton>
        <TaskButton $state="open" aria-label="Browser"><ChromeIcon /></TaskButton>
        <TaskButton $state="active" aria-label="Spreadsheet"><ExcelIcon /></TaskButton>
        <TaskButton aria-label="Notes"><NotesIcon /></TaskButton>
        <TaskButton aria-label="Charts"><TradingIcon /></TaskButton>
        <TaskButton aria-label="Exchange"><CoinIcon /></TaskButton>
        <TaskButton $state="open" aria-label="Clock"><ClockIcon /></TaskButton>
        <TaskButton aria-label="Teams"><TeamsIcon /></TaskButton>
      </TaskBar>
    </Page>
  );
}
